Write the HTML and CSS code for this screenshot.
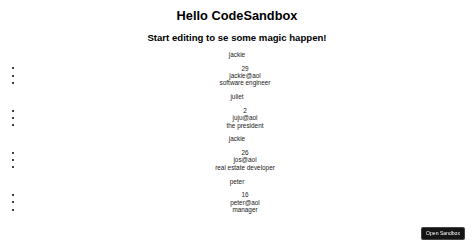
FILE: index.html
```html
<!DOCTYPE html>
<html>
<head>
<meta charset="utf-8">
<link rel="stylesheet" href="styles.css">
</head>
<body>
<div class="app">
  <h1>Hello CodeSandbox</h1>
  <h2>Start editing to se some magic happen!</h2>
  <div class="person">
    <p class="name">jackie</p>
    <ul class="info">
      <li>29</li>
      <li>jackie@aol</li>
      <li>software engineer</li>
    </ul>
  </div>
  <div class="person">
    <p class="name">juliet</p>
    <ul class="info">
      <li>2</li>
      <li>juju@aol</li>
      <li>the president</li>
    </ul>
  </div>
  <div class="person">
    <p class="name">jackie</p>
    <ul class="info">
      <li>26</li>
      <li>jos@aol</li>
      <li>real estate developer</li>
    </ul>
  </div>
  <div class="person">
    <p class="name">peter</p>
    <ul class="info">
      <li>16</li>
      <li>peter@aol</li>
      <li>manager</li>
    </ul>
  </div>
</div>
<a class="open-sandbox" href="#">Open Sandbox</a>
</body>
</html>
```
FILE: styles.css
```css
html, body {
  background: #ffffff;
}
body {
  margin: 0;
  font-family: "Liberation Sans", Arial, sans-serif;
  font-size: 6.4px;
  line-height: 7.36px;
  color: #000;
}
.app {
  text-align: center;
  padding: 0 3.2px;
}
.app h1 {
  font-size: 12.8px;
  line-height: 14.72px;
  margin: 0 0 8.58px;
  padding-top: 8.58px;
}
.app h2 {
  font-size: 9.6px;
  line-height: 11.04px;
  margin: 7.97px 0;
}
.name {
  margin: 6.4px 0;
  color: #222;
}
.info {
  margin: 6.4px 0;
  padding-left: 16px;
  list-style: none;
  color: #222;
}
.info li {
  position: relative;
}
.info li::before {
  content: "";
  position: absolute;
  left: -7.4px;
  top: 2.7px;
  width: 2px;
  height: 2px;
  border-radius: 50%;
  background: #000;
}
.open-sandbox {
  position: fixed;
  right: 9px;
  bottom: 8px;
  width: 44px;
  height: 13px;
  box-sizing: border-box;
  display: flex;
  align-items: center;
  justify-content: center;
  background: #151515;
  color: #ffffff;
  font-family: "Liberation Sans", Arial, sans-serif;
  font-size: 5.1px;
  line-height: 1;
  text-decoration: none;
  border-radius: 2px;
  border: 0.4px solid rgba(255, 255, 255, 0.2);
}
```
